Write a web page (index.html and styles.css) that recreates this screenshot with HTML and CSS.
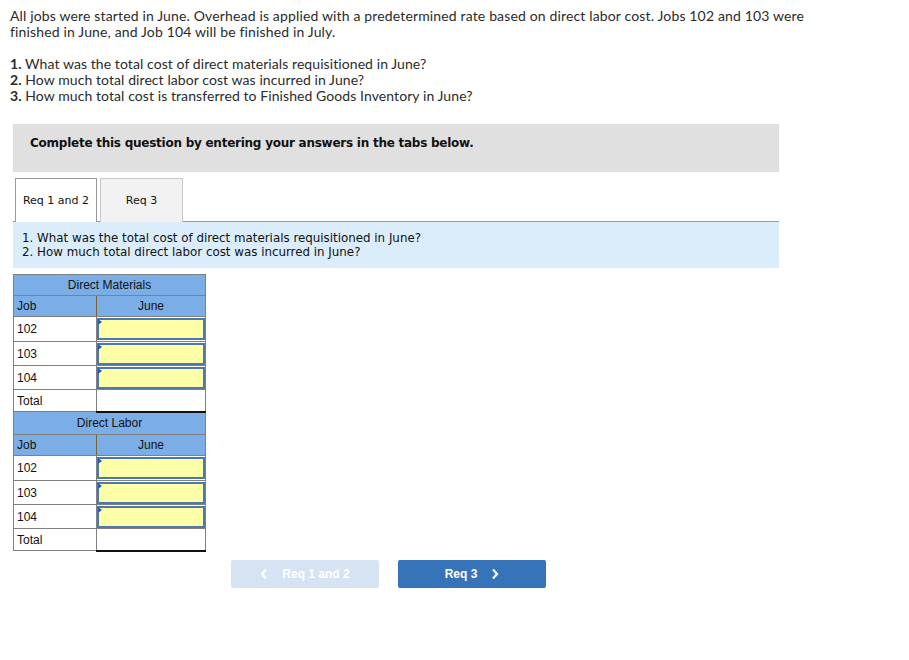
FILE: index.html
```html
<!DOCTYPE html>
<html lang="en">
<head>
    <meta charset="UTF-8">
    <meta name="viewport" content="width=device-width, initial-scale=1.0">
    <title>Job costing</title>
    <link rel="stylesheet" href="styles.css">
</head>
<body>
    <div class="page">
        <p class="intro">All jobs were started in June. Overhead is applied with a predetermined rate based on direct labor cost. Jobs 102 and 103 were finished in June, and Job 104 will be finished in July.</p>
        <ol class="questions">
            <li><b>1.</b> What was the total cost of direct materials requisitioned in June?</li>
            <li><b>2.</b> How much total direct labor cost was incurred in June?</li>
            <li><b>3.</b> How much total cost is transferred to Finished Goods Inventory in June?</li>
        </ol>

        <div class="notice">Complete this question by entering your answers in the tabs below.</div>

        <div class="tabs">
            <div class="tab active">Req 1 and 2</div>
            <div class="tab">Req 3</div>
        </div>
        <div class="info">
            1. What was the total cost of direct materials requisitioned in June?<br>
            2. How much total direct labor cost was incurred in June?
        </div>

        <table class="costs">
            <tr class="title"><td colspan="2">Direct Materials</td></tr>
            <tr class="head"><td class="job">Job</td><td class="month">June</td></tr>
            <tr class="row first"><td class="job">102</td><td class="entry"><div class="field"></div></td></tr>
            <tr class="row"><td class="job">103</td><td class="entry"><div class="field"></div></td></tr>
            <tr class="row"><td class="job">104</td><td class="entry"><div class="field"></div></td></tr>
            <tr class="total"><td class="job">Total</td><td class="sum"></td></tr>
            <tr class="title second"><td colspan="2">Direct Labor</td></tr>
            <tr class="head"><td class="job">Job</td><td class="month">June</td></tr>
            <tr class="row first"><td class="job">102</td><td class="entry"><div class="field"></div></td></tr>
            <tr class="row"><td class="job">103</td><td class="entry"><div class="field"></div></td></tr>
            <tr class="row"><td class="job">104</td><td class="entry"><div class="field"></div></td></tr>
            <tr class="total"><td class="job">Total</td><td class="sum"></td></tr>
        </table>

        <div class="nav">
            <button class="prev" disabled>
                <svg class="chev" width="8" height="12" viewBox="0 0 8 12"><path d="M6 1.5 L2 6 L6 10.5" fill="none" stroke="currentColor" stroke-width="2.2"/></svg>
                Req 1 and 2
            </button>
            <button class="next">
                Req 3
                <svg class="chev" width="8" height="12" viewBox="0 0 8 12"><path d="M2 1.5 L6 6 L2 10.5" fill="none" stroke="currentColor" stroke-width="2.2"/></svg>
            </button>
        </div>
    </div>
</body>
</html>
```

FILE: styles.css
```css
* {
box-sizing: border-box;
margin: 0;
padding: 0;
}

body {
background: white;
color: #222;
}

.page {
padding: 8px 0 0 0;
width: 909px;
}

.intro, .questions {
font-family: "Lato", "Liberation Sans", sans-serif;
font-size: 14px;
letter-spacing: 0.15px;
line-height: 16px;
color: #2b2b2b;
padding-left: 10px;
padding-right: 90px;
}

.intro {
padding-right: 85px;
}

.questions {
list-style: none;
margin-top: 16px;
letter-spacing: 0.08px;
}

.questions b {
font-weight: 700;
}

.notice {
margin: 20px 0 0 13px;
width: 766px;
height: 48px;
background: #e0e0e0;
font-family: "DejaVu Sans", Verdana, sans-serif;
font-weight: bold;
font-size: 12px;
letter-spacing: -0.25px;
line-height: 38px;
padding-left: 17px;
color: #111;
}

.tabs {
margin: 6px 0 0 13px;
width: 766px;
height: 44px;
border-bottom: 1px solid #9a9a9a;
display: flex;
gap: 3px;
padding-left: 2px;
}

.tab {
width: 83px;
height: 44px;
border: 1px solid #c8c8c8;
border-bottom: none;
background: #f2f2f2;
font-family: "DejaVu Sans", Verdana, sans-serif;
font-size: 11px;
line-height: 43px;
text-align: center;
color: #111;
}

.tab.active {
width: 82px;
border-color: #9a9a9a;
background: white;
}

.info {
margin-left: 13px;
width: 766px;
height: 46px;
background: #dbedfb;
font-family: "DejaVu Sans", Verdana, sans-serif;
font-size: 11.85px;
line-height: 14px;
padding: 9px 0 0 9px;
color: #111;
}

.costs {
margin: 6px 0 0 13px;
width: 193px;
border-collapse: collapse;
font-family: "Liberation Sans", Arial, sans-serif;
font-size: 12px;
color: #111;
}

.costs td {
border: 1px solid #808080;
padding: 0 3px;
}

.title td {
background: #7baee6;
text-align: center;
height: 21px;
}

.title.second td {
height: 23px;
}

.head td {
background: #7baee6;
height: 21px;
}

.head .month {
text-align: center;
border-left-color: #7a6232;
}

.head .job {
border-right-color: #7a6232;
}

.costs .job {
width: 83px;
}

.row td {
height: 24px;
}

.row.first td {
height: 25px;
}

.costs td.entry {
padding: 0;
border-left-color: #7a6232;
}

.field {
position: relative;
height: 22px;
background: #ffffa8;
border: 2px solid #4c79ad;
}

.field::before {
content: "";
position: absolute;
left: -1px;
top: -1px;
border-left: 4px solid #2060c0;
border-top: 3px solid transparent;
border-bottom: 3px solid transparent;
}

.total td {
height: 22px;
}

.costs td.sum {
border-bottom: 2px solid #111;
background: white;
}

.nav {
margin: 8px 0 0 231px;
display: flex;
gap: 19px;
}

.nav button {
width: 148px;
height: 28px;
border: none;
border-radius: 2px;
font-family: "Liberation Sans", Arial, sans-serif;
font-weight: bold;
font-size: 12px;
color: white;
cursor: pointer;
display: flex;
align-items: center;
justify-content: center;
gap: 14px;
}

.chev {
display: block;
}

.prev {
background: #d6e3f2;
}

.next {
width: 147px;
background: #3673b9;
}
```
